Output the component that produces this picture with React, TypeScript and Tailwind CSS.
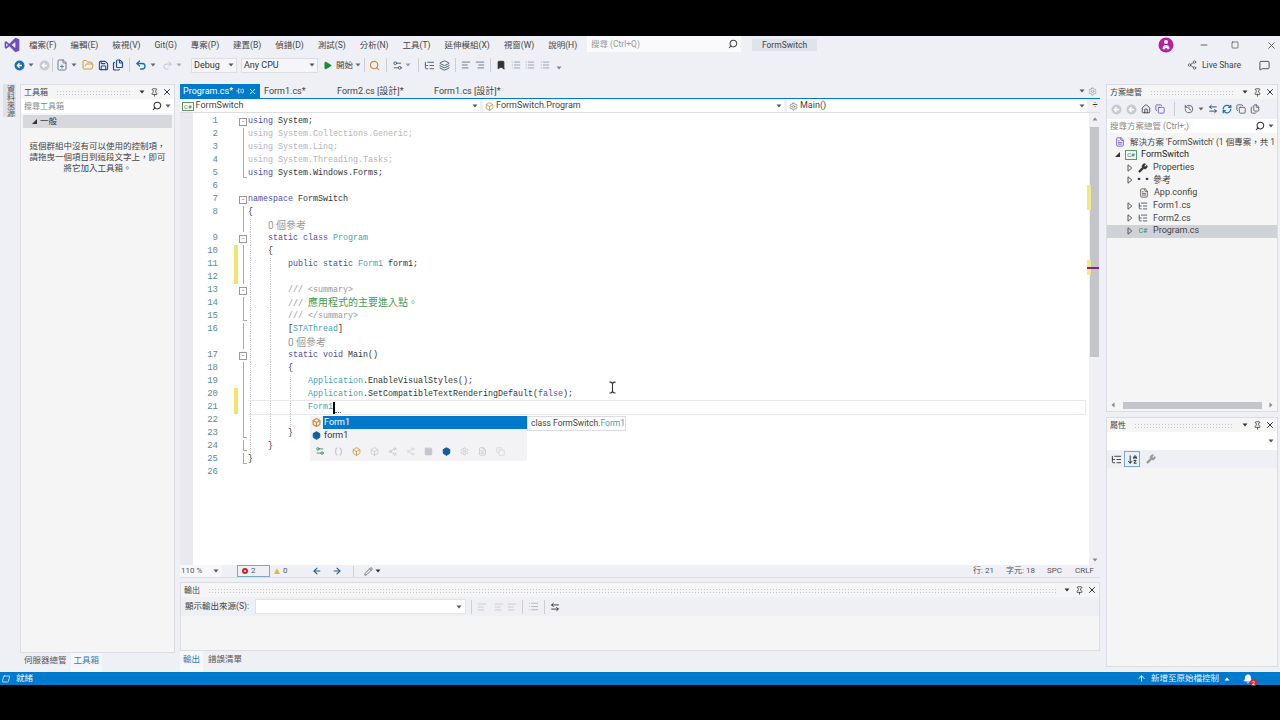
import React from 'react';
import {
  ArrowLeft, ArrowRight, ArrowUp, Bell, Bookmark, Braces, Box, Copy, Files, FileText, History, Layers, ListTree, MessageSquare,
  Minus, Pin, Play, RefreshCw, Home, Save, Search, Settings, Share2, Square, TextCursor, Undo2, Redo2, Wrench, X, ArrowLeftRight, Settings2,
  FolderOpen, FilePlus, AlignLeft, AlignRight, ArrowDownAZ, List, Pencil,
} from 'lucide-react';

const ui = "font-['Roboto','Noto_Sans_CJK_TC',sans-serif]";

const Caret = ({ className = 'text-[#555]' }: { className?: string }) => (
  <svg width="6" height="4" viewBox="0 0 6 4" className={`shrink-0 ${className}`}>
    <path d="M0.5 0.5h5L3 3.5z" fill="currentColor" />
  </svg>
);

const Tri = ({ filled }: { filled?: boolean }) => (
  <svg width="6" height="8" viewBox="0 0 6 8" className="shrink-0">
    {filled ? <path d="M5 1v5H0z" fill="#333" /> : <path d="M1 .8 4.8 4 1 7.2z" fill="none" stroke="#555" />}
  </svg>
);

const VsLogo = () => (
  <svg width="16" height="16" viewBox="0 0 24 24">
    <path
      fillRule="evenodd"
      fill="#6d4fbe"
      d="M17 1 8 10 3.4 6.4 1 7.6v8.8l2.4 1.2L8 14l9 9 6-2.5v-17zM3.4 9.4 6 12l-2.6 2.6zM17 7.5v9L11.5 12z"
    />
  </svg>
);

const Avatar = () => (
  <svg width="16" height="16" viewBox="0 0 16 16">
    <circle cx="8" cy="8" r="7.5" fill="#b81f9e" />
    <circle cx="8" cy="5" r="2" fill="#fff" />
    <path d="M4.5 12c0-3 1.5-4 3.5-4s3.5 1 3.5 4l-2 .5-1.5-2-1.500 2z" fill="#fff" />
  </svg>
);

const CircleNav = ({ color }: { color: string }) => (
  <svg width="11" height="11" viewBox="0 0 11 11" className="shrink-0">
    <circle cx="5.5" cy="5.500" r="5" fill={color} />
    <path d="M8 5.500H3.500M5.500 3.300 3.300 5.500l2.200 2.200" stroke="#fff" strokeWidth="1.300" fill="none" />
  </svg>
);

const Grip = () => (
  <div className="flex-1 mx-2 h-[5px] bg-[radial-gradient(#c4c6cc_0.7px,transparent_0.8px)] bg-[length:3px_3px]" />
);

const PanelTitle = ({ title }: { title: string }) => (
  <div className="h-[14px] flex items-center pl-[3px] pr-[2px] text-[8px] text-[#444] shrink-0">
    <span className="pt-[1px]">{title}</span>
    <Grip />
    <Caret className="text-[#333] mr-[5px]" />
    <Pin size={9} className="text-[#333] mr-[3px]" />
    <X size={10} className="text-[#333]" strokeWidth={2.400} />
  </div>
);

const menus = ['檔案(F)', '編輯(E)', '檢視(V)', 'Git(G)', '專案(P)', '建置(B)', '偵錯(D)', '測試(S)', '分析(N)', '工具(T)', '延伸模組(X)', '視窗(W)', '說明(H)'];

const Sep = () => <div className="w-px h-[14px] bg-[#ccced6] mx-[5px] shrink-0" />;

const TitleBar = () => (
  <div className="h-[18px] flex items-center text-[8.500px] text-[#444] shrink-0">
    <div className="w-[29px] pl-[4px] flex"><VsLogo /></div>
    <div className="flex gap-[14px] w-[558px]">
      {menus.map((m) => <span key={m} className="whitespace-nowrap">{m}</span>)}
    </div>
    <div className="w-[154px] h-[16px] bg-[#fafafc] flex items-center justify-between pl-[4px] pr-[3px] text-[#999] -mt-[2px]">
      <span>搜尋 (Ctrl+Q)</span>
      <Search size={10} className="text-[#444] scale-x-[-1]" strokeWidth={2.500} />
    </div>
    <div className="ml-[11px] w-[65px] h-[12px] bg-[#dfe3ea] flex items-center justify-center text-[#444]">FormSwitch</div>
    <div className="flex-1 flex justify-end pr-[25px]"><Avatar /></div>
    <Minus size={10} className="text-[#444] mr-[22px]" />
    <Square size={8} className="text-[#444] mr-[27px]" />
    <X size={11} className="text-[#555] mr-[3px]" />
  </div>
);

const Combo = ({ label, w, gap }: { label: string; w: string; gap: string }) => (
  <div className={`${w} ${gap} h-[15px] bg-[#f6f6f9] border border-[#dcdde3] flex items-center justify-between px-[2px] text-[9px] text-[#333] shrink-0`}>
    <span className="pt-[1px]">{label}</span>
    <Caret />
  </div>
);

const ToolBar = () => (
  <div className="h-[22px] flex items-center pl-[14px] shrink-0">
    <CircleNav color="#1f6fa8" />
    <Caret className="mx-[3px] text-[#666]" />
    <div className="ml-[2px] flex"><CircleNav color="#c7cad2" /></div>
    <div className="w-px h-[14px] bg-[#ccced6] mx-[2px] shrink-0" />
    <FilePlus size={12} className="text-[#6a7a8c] ml-[1px]" />
    <Caret className="mx-[3px] text-[#666]" />
    <FolderOpen size={12} className="text-[#c99a3e] ml-[2px]" />
    <Save size={11} className="text-[#1f4f96] ml-[4px]" strokeWidth={2.400} />
    <Files size={12} className="text-[#1f4f96] ml-[3px]" strokeWidth={2.400} />
    <Sep />
    <Undo2 size={12} className="text-[#1f6fa8]" strokeWidth={2.600} />
    <Caret className="mx-[3px] text-[#666]" />
    <Redo2 size={11} className="text-[#c0c3cb] ml-[3px]" />
    <Caret className="mx-[3px] text-[#aaa]" />
    <div className="w-[6px]" />
    <Combo label="Debug" w="w-[46px]" gap="mr-[4px]" />
    <Combo label="Any CPU" w="w-[77px]" gap="mr-[4px]" />
    <div className="w-px" />
    <Play size={9} className="text-[#1a8a3a] fill-[#1a8a3a] mr-[4px]" />
    <span className="text-[8.500px] text-[#444] mr-[2px]">開始</span>
    <Caret className="text-[#666]" />
    <div className="w-px h-[14px] bg-[#ccced6] mx-[3px] shrink-0" />
    <Search size={11} className="text-[#c98a2e] ml-[1px] mr-[1px]" strokeWidth={2.500} />
    <Sep />
    <Settings2 size={11} className="text-[#4a5a6a]" />
    <Caret className="mx-[2px] text-[#999]" />
    <Sep />
    <ListTree size={11} className="text-[#4a5a6a]" />
    <Layers size={11} className="text-[#4a5a6a] ml-[4px]" />
    <Sep />
    <AlignLeft size={10} className="text-[#5a6a7a]" />
    <AlignRight size={10} className="text-[#5a6a7a] ml-[4px]" />
    <Sep />
    <Bookmark size={10} className="text-[#333] fill-[#333]" />
    <List size={10} className="text-[#8b97a5] ml-[5px]" />
    <List size={10} className="text-[#8b97a5] ml-[4px]" />
    <List size={10} className="text-[#8b97a5] ml-[5px]" />
    <Caret className="ml-[6px] text-[#888] mt-[6px]" />
    <div className="flex-1" />
    <Share2 size={10} className="text-[#555] mr-[5px]" />
    <span className="text-[8.500px] text-[#444] mr-[18px]">Live Share</span>
    <MessageSquare size={11} className="text-[#444] mr-[10px]" />
  </div>
);

const LeftDock = () => (
  <div className="flex w-[175px] shrink-0 h-full">
    <div className="w-[20px] shrink-0 pl-[3px]">
      <div className="w-[13px] h-[33px] bg-[#dfe1e7] text-[8px] text-[#555] leading-[8px] text-center [writing-mode:vertical-rl] flex items-center justify-center">資料來源</div>
    </div>
    <div className="w-[155px] flex flex-col">
      <div className="flex-1 flex flex-col bg-[#f5f5f5] border border-[#dcdde2] min-h-0">
        <PanelTitle title="工具箱" />
        <div className="h-[14px] bg-white flex items-center justify-between px-[3px] text-[8px] text-[#888]">
          <span className="pt-[1px]">搜尋工具箱</span>
          <div className="flex items-center gap-[3px]">
            <Search size={10} className="text-[#333] scale-x-[-1]" strokeWidth={2.500} />
            <Caret />
          </div>
        </div>
        <div className="mx-[2px] mt-[2px] h-[13px] bg-[#d6d8de] flex items-center pl-[9px] gap-[2px] text-[8.500px] text-[#333]">
          <Tri filled />
          <span>一般</span>
        </div>
        <p className="mt-[13px] px-[6px] text-[8.500px] leading-[11px] text-center text-[#444]">這個群組中沒有可以使用的控制項，請拖曳一個項目到這段文字上，即可將它加入工具箱。</p>
      </div>
      <div className="h-[19px] shrink-0 flex text-[8.500px] pl-[3px]">
        <span className="px-[1px] pt-[1px] text-[#555]">伺服器總管</span>
        <span className="ml-[3px] px-[3px] pt-[1px] text-[#2f7ab0] bg-[#f6f7fa]">工具箱</span>
      </div>
    </div>
  </div>
);

type Tok = [string, string];
type CodeRow = { n?: number; indent: number; toks?: Tok[]; fold?: 'box' | 'mid' | 'end'; changed?: boolean; lens?: boolean; current?: boolean };

const kw = 'text-[#4e4eae]';
const tx = 'text-[#333]';
const ty = 'text-[#46a2b6]';
const dim = 'text-[#b4b4bc]';
const doc = 'text-[#9a9a9a]';
const cm = 'text-[#3f9a58] text-[10px]';

const rows: CodeRow[] = [
  { n: 1, indent: 0, fold: 'box', toks: [['using', kw], [' System;', tx]] },
  { n: 2, indent: 0, fold: 'mid', toks: [['using System.Collections.Generic;', dim]] },
  { n: 3, indent: 0, fold: 'mid', toks: [['using System.Linq;', dim]] },
  { n: 4, indent: 0, fold: 'mid', toks: [['using System.Threading.Tasks;', dim]] },
  { n: 5, indent: 0, fold: 'end', toks: [['using', kw], [' System.Windows.Forms;', tx]] },
  { n: 6, indent: 0 },
  { n: 7, indent: 0, fold: 'box', toks: [['namespace', kw], [' FormSwitch', tx]] },
  { n: 8, indent: 0, fold: 'mid', toks: [['{', tx]] },
  { indent: 1, fold: 'mid', lens: true, toks: [['0 個參考', 'text-[#999]']] },
  { n: 9, indent: 1, fold: 'box', toks: [['static class', kw], [' ', tx], ['Program', ty]] },
  { n: 10, indent: 1, fold: 'mid', changed: true, toks: [['{', tx]] },
  { n: 11, indent: 2, fold: 'mid', changed: true, toks: [['public static', kw], [' ', tx], ['Form1', ty], [' form1;', tx]] },
  { n: 12, indent: 2, fold: 'mid', changed: true },
  { n: 13, indent: 2, fold: 'box', toks: [['/// <summary>', doc]] },
  { n: 14, indent: 2, fold: 'mid', toks: [['/// ', doc], ['應用程式的主要進入點。', cm]] },
  { n: 15, indent: 2, fold: 'end', toks: [['/// </summary>', doc]] },
  { n: 16, indent: 2, fold: 'mid', toks: [['[', tx], ['STAThread', ty], [']', tx]] },
  { indent: 2, fold: 'mid', lens: true, toks: [['0 個參考', 'text-[#999]']] },
  { n: 17, indent: 2, fold: 'box', toks: [['static void', kw], [' Main()', tx]] },
  { n: 18, indent: 2, fold: 'mid', toks: [['{', tx]] },
  { n: 19, indent: 3, fold: 'mid', toks: [['Application', ty], ['.EnableVisualStyles();', tx]] },
  { n: 20, indent: 3, fold: 'mid', changed: true, toks: [['Application', ty], ['.SetCompatibleTextRenderingDefault(', tx], ['false', kw], [');', tx]] },
  { n: 21, indent: 3, fold: 'mid', changed: true, current: true, toks: [['Form1', ty]] },
  { n: 22, indent: 3, fold: 'mid' },
  { n: 23, indent: 2, fold: 'end', toks: [['}', tx]] },
  { n: 24, indent: 1, fold: 'end', toks: [['}', tx]] },
  { n: 25, indent: 0, fold: 'end', toks: [['}', tx]] },
  { n: 26, indent: 0 },
];

const Fold = ({ kind }: { kind?: CodeRow['fold'] }) => (
  <div className="w-[9px] h-full shrink-0 relative">
    {kind === 'box' && <div className="absolute left-0 top-[3px] w-[8px] h-[8px] border border-[#999] bg-white text-[8px] leading-[5px] text-center text-[#666]">-</div>}
    {kind === 'mid' && <div className="absolute left-[4px] top-0 bottom-0 border-l border-[#a9a9a9]" />}
    {kind === 'end' && <div className="absolute left-[4px] top-0 h-[11px] w-[4px] border-l border-b border-[#a9a9a9]" />}
  </div>
);

const Row = ({ r }: { r: CodeRow }) => (
  <div className="h-[13px] flex">
    <div className="w-[25px] shrink-0 text-right text-[9px] leading-[13px] text-[#5a8a9a] font-['Liberation_Mono',monospace]">{r.n}</div>
    <div className="w-[16px] shrink-0" />
    <div className={`w-1 shrink-0 ${r.changed ? 'bg-[#eee56e]' : ''}`} />
    <div className="w-px shrink-0" />
    <Fold kind={r.fold} />
    <div className={`flex-1 flex ${r.current ? 'border-y border-r border-[#e8e8ec] -my-px h-[15px] items-center' : ''}`}>
      {Array.from({ length: r.indent }).map((_, i) => (
        <div key={i} className="w-5 h-full pl-[2px] shrink-0">
          <div className="h-full border-l border-dotted border-[#c8c8c8]" />
        </div>
      ))}
      {r.toks && (
        <div className={`whitespace-pre leading-[13px] ${r.lens ? 'text-[10px]' : "text-[8.340px] font-['Liberation_Mono','Noto_Sans_CJK_TC',monospace]"}`}>
          {r.toks.map(([t, c], i) => <span key={i} className={c}>{t}</span>)}
        </div>
      )}
      {r.current && <div className="w-[1.500px] h-[12px] bg-black" />}
      {r.current && <div className="w-[6px] h-[2px] border-b border-dotted border-[#667] self-end mb-[1px]" />}
    </div>
  </div>
);

const Completion = () => (
  <div className="absolute left-[130px] top-[303px] flex items-start">
    <div className="w-[217px] bg-[#f3f3f5] pb-[1px]">
      <div className="h-[13px] flex items-center">
        <div className="w-[13px] flex justify-center"><Box size={9} className="text-[#c98a2e]" strokeWidth={3} /></div>
        <div className="flex-1 h-full bg-[#0079cb] text-white text-[9px] leading-[13px] pl-[1px]">Form1</div>
      </div>
      <div className="h-[13px] flex items-center">
        <div className="w-[13px] flex justify-center"><Box size={9} className="text-[#0f5f9a] fill-[#0f5f9a]" /></div>
        <div className="flex-1 text-[#333] text-[9px] leading-[13px] pl-[1px]">form1</div>
      </div>
      <div className="h-[18px] flex items-center pl-[5px] gap-[9px]">
        <Settings2 size={10} className="text-[#2a8a5a]" />
        <Braces size={9} className="text-[#aab]" />
        <Box size={9} className="text-[#c98a2e]" />
        <Box size={9} className="text-[#c4c6cc]" />
        <Share2 size={9} className="text-[#c4c6cc]" />
        <Share2 size={9} className="text-[#d0d2d8]" />
        <Square size={9} className="text-[#c4c6cc] fill-[#c4c6cc]" />
        <Box size={9} className="text-[#0f5f9a] fill-[#0f5f9a]" />
        <Settings size={9} className="text-[#c4c6cc]" />
        <FileText size={9} className="text-[#c4c6cc]" />
        <Copy size={9} className="text-[#d0d2d8]" />
      </div>
    </div>
    <div className="h-[15px] w-[99px] bg-white border border-[#dcdde2] text-[8.500px] leading-[13px] pl-[3px] text-[#444] whitespace-nowrap">
      class FormSwitch.<span className={ty}>Form1</span>
    </div>
  </div>
);

const EditorArea = () => (
  <div className="flex-1 min-h-0 flex bg-white relative overflow-hidden">
    <div className="w-[13px] shrink-0 bg-[#eaeaee]" />
    <div className="flex-1 pt-[2px] pr-[3px]">
      {rows.map((r, i) => <Row key={i} r={r} />)}
    </div>
    <div className="w-[11px] shrink-0 bg-[#f0f0f4] flex flex-col items-center relative">
      <Caret className="text-[#888] rotate-180 mt-[4px]" />
      <div className="mt-[6px] w-[9px] h-[230px] bg-[#c4c5cb]" />
      <div className="flex-1" />
      <Caret className="text-[#888] mb-[3px]" />
      <div className="absolute left-[-2px] top-[72px] w-[4px] h-[25px] bg-[#efe98a]" />
      <div className="absolute left-[-2px] top-[147px] w-[4px] h-[15px] bg-[#efe98a]" />
      <div className="absolute left-[-2px] top-[154px] w-[12px] h-[2px] bg-[#8a1f8a]" />
    </div>
    <Completion />
    <TextCursor size={13} className="absolute left-[426px] top-[268px] text-[#333]" />
  </div>
);

const EditorFooter = () => (
  <div className="h-[13px] shrink-0 flex items-center text-[8px] text-[#555] bg-[#eef0f5] border-b border-[#dcdde2]">
    <div className="w-[42px] h-full bg-[#f7f7f9] flex items-center justify-between px-[1px] pr-[3px]"><span>110 %</span><Caret /></div>
    <div className="ml-[15px] w-[33px] h-[12px] border border-[#7fa9bb] flex items-center gap-[3px] pl-[4px]">
      <div className="w-[6px] h-[6px] rounded-full border-2 border-[#c8242c]" />
      <span>2</span>
    </div>
    <div className="ml-[4px] w-0 h-0 border-x-[3.500px] border-x-transparent border-b-[6px] border-b-[#e5b83a]" />
    <span className="ml-[3px]">0</span>
    <ArrowLeft size={10} className="ml-[24px] text-[#1f5f88]" strokeWidth={2.600} />
    <ArrowRight size={10} className="ml-[10px] text-[#1f5f88]" strokeWidth={2.600} />
    <div className="ml-[11px] w-px h-[11px] bg-[#cfd1d8]" />
    <Pencil size={9} className="ml-[10px] text-[#555]" />
    <Caret className="ml-[2px] text-[#333]" />
    <div className="flex-1" />
    <span className="w-[33px]">行: 21</span>
    <span className="w-[41px]">字元: 18</span>
    <span className="w-[28px]">SPC</span>
    <span className="w-[24px]">CRLF</span>
    <div className="w-px" />
  </div>
);

const OutputPanel = () => (
  <div className="h-[69px] shrink-0 mt-[4px] flex flex-col bg-[#f5f5f5] border border-[#dcdde2]">
    <PanelTitle title="輸出" />
    <div className="h-[19px] bg-[#eef0f5] flex items-center pl-[4px] text-[8.500px] text-[#444]">
      <span className="w-[70px] whitespace-nowrap">顯示輸出來源(S):</span>
      <div className="w-[211px] h-[15px] bg-white border border-[#e2e3e8] flex items-center justify-end pr-[3px]"><Caret /></div>
      <Sep />
      <AlignLeft size={10} className="text-[#c4c6cc]" />
      <AlignLeft size={10} className="text-[#c4c6cc] ml-[7px]" />
      <AlignLeft size={10} className="text-[#c4c6cc] ml-[3px]" />
      <Sep />
      <List size={11} className="text-[#b0b3bb]" />
      <Sep />
      <ArrowLeftRight size={10} className="text-[#222]" />
    </div>
  </div>
);

const treeRows: { indent: string; tri?: 'open' | 'closed'; icon: React.ReactNode; label: string; sel?: boolean; bold?: boolean; size?: string }[] = [
  { indent: 'pl-[7px]', icon: <FileText size={10} className="text-[#6d4fbe]" />, label: "解決方案 'FormSwitch' (1 個專案，共 1", size: 'text-[8.500px]' },
  { indent: 'pl-[8px]', tri: 'open', icon: <span className="border border-[#5a9a6a] text-[#3a7a4a] text-[6px] leading-[8px] px-[1px]">C#</span>, label: 'FormSwitch', bold: true },
  { indent: 'pl-[20px]', tri: 'closed', icon: <Wrench size={10} className="text-[#333] fill-[#333]" />, label: 'Properties' },
  { indent: 'pl-[20px]', tri: 'closed', icon: <span className="text-[#333] text-[8px] leading-[8px]">▪▪</span>, label: '參考' },
  { indent: 'pl-[31px]', icon: <FileText size={10} className="text-[#555]" />, label: 'App.config' },
  { indent: 'pl-[20px]', tri: 'closed', icon: <ListTree size={10} className="text-[#3a4a5a]" />, label: 'Form1.cs' },
  { indent: 'pl-[20px]', tri: 'closed', icon: <ListTree size={10} className="text-[#3a4a5a]" />, label: 'Form2.cs' },
  { indent: 'pl-[20px]', tri: 'closed', icon: <span className="text-[#3a8a5a] text-[7px] leading-[8px]">C#</span>, label: 'Program.cs', sel: true },
];

const RightDock = () => (
  <div className="w-[172px] shrink-0 flex flex-col pb-[5px]">
    <div className="h-[328px] shrink-0 flex flex-col bg-[#f5f5f5] border border-[#dcdde2]">
      <PanelTitle title="方案總管" />
      <div className="h-[20px] bg-[#eef0f5] flex items-center pl-[4px] gap-[4px]">
        <CircleNav color="#c7cad2" />
        <CircleNav color="#c7cad2" />
        <Home size={10} className="text-[#333]" />
        <Copy size={10} className="text-[#6d4fbe]" />
        <Sep />
        <History size={10} className="text-[#555]" />
        <Caret className="text-[#666]" />
        <ArrowLeftRight size={10} className="text-[#1f2f4f]" />
        <RefreshCw size={10} className="text-[#1f6fb8]" strokeWidth={3} />
        <Copy size={10} className="text-[#555]" />
        <Files size={10} className="text-[#555]" />
      </div>
      <div className="h-[14px] bg-white flex items-center justify-between px-[3px] text-[8.500px] text-[#888]">
        <span>搜尋方案總管 (Ctrl+;)</span>
        <div className="flex items-center gap-[3px]">
          <Search size={10} className="text-[#333] scale-x-[-1]" strokeWidth={2.500} />
          <Caret />
        </div>
      </div>
      <div className="pt-[3px] flex-1 overflow-hidden">
        {treeRows.map((t) => (
          <div key={t.label} className={`h-[12.700px] flex items-center gap-[4px] ${t.size ?? 'text-[9px]'} text-[#444] whitespace-nowrap ${t.indent} ${t.sel ? 'bg-[#d0d2da]' : ''}`}>
            {t.tri && <Tri filled={t.tri === 'open'} />}
            <div className="w-[12px] flex justify-center shrink-0">{t.icon}</div>
            <span className={t.bold ? 'text-[#222]' : ''}>{t.label}</span>
          </div>
        ))}
      </div>
      <div className="h-[10px] flex items-center justify-between px-[3px] mb-[1px]">
        <Caret className="text-[#888] rotate-90" />
        <div className="w-[139px] h-[7px] bg-[#c4c5cb]" />
        <Caret className="text-[#888] -rotate-90" />
      </div>
    </div>
    <div className="flex-1 mt-[5px] flex flex-col bg-[#f5f5f5] border border-[#dcdde2] min-h-0">
      <PanelTitle title="屬性" />
      <div className="h-[18px] bg-white flex items-center justify-end pr-[3px]"><Caret /></div>
      <div className="h-[18px] bg-[#eef0f5] flex items-center pl-[4px] gap-[2px]">
        <ListTree size={11} className="text-[#333]" />
        <div className="w-[16px] h-[16px] border border-[#7fa9bb] bg-[#e6f0f6] flex items-center justify-center">
          <ArrowDownAZ size={11} className="text-[#222]" />
        </div>
        <Wrench size={10} className="text-[#999] fill-[#999] ml-[4px]" />
      </div>
    </div>
  </div>
);

const StatusBar = () => (
  <div className="h-[13px] shrink-0 bg-[#007acc] flex items-center text-[8.500px] text-[#e8f2fa] pl-[2px]">
    <Square size={8} className="text-white -skew-x-12" />
    <span className="ml-[6px]">就緒</span>
    <div className="flex-1" />
    <ArrowUp size={9} className="text-white mr-[5px]" strokeWidth={2.600} />
    <span>新增至原始檔控制</span>
    <Caret className="ml-[5px] text-white rotate-180" />
    <div className="relative ml-[13px] mr-[27px]">
      <Bell size={10} className="text-white fill-white" />
      <span className="absolute -right-[4px] -bottom-[2px] w-[7px] h-[7px] rounded-full bg-[#d12a2a] text-white text-[6px] leading-[7px] text-center">2</span>
    </div>
  </div>
);

export default function App() {
  return (
    <div className={`w-[1280px] h-[720px] bg-black flex flex-col overflow-hidden ${ui}`}>
      <div className="h-9 shrink-0" />
      <div className="h-[649px] shrink-0 flex flex-col bg-[#eef0f5]">
        <TitleBar />
        <ToolBar />
        <div className="h-[8px] shrink-0" />
        <div className="flex-1 min-h-0 flex">
          <LeftDock />
          <div className="w-[5px] shrink-0" />
          <div className="w-[920px] shrink-0 flex flex-col">
            <div className="h-[14px] shrink-0 flex items-end text-[9px] text-[#444]">
              <div className="w-[80px] h-full bg-[#007acc] text-white flex items-center justify-between pl-[3px] pr-[3px]">
                <span className="pt-[1px]">Program.cs*</span>
                <span className="flex items-center gap-[4px]"><Pin size={8} className="rotate-90" /><X size={9} strokeWidth={2.500} /></span>
              </div>
              <span className="h-full flex items-center pt-[1px] ml-[4px] w-[73px]">Form1.cs*</span>
              <span className="h-full flex items-center pt-[1px] w-[97px]">Form2.cs [設計]*</span>
              <span className="h-full flex items-center pt-[1px]">Form1.cs [設計]*</span>
              <div className="flex-1 h-full flex items-center justify-end gap-[3px] pr-[3px]">
                <Caret />
                <Settings size={9} className="text-[#999]" />
              </div>
            </div>
            <div className="h-px bg-[#007acc] shrink-0" />
            <div className="h-[14px] shrink-0 flex gap-[3px] bg-[#eef0f5] border-b border-[#dcdde2] text-[9px] text-[#444]">
              <div className="w-[300px] bg-white flex items-center justify-between px-[2px]">
                <span className="flex items-center gap-[2px] pt-[1px]"><span className="border border-[#5a9a6a] text-[#3a7a4a] text-[6px] leading-[7px] px-[1px]">C#</span>FormSwitch</span>
                <Caret />
              </div>
              <div className="w-[301px] bg-white flex items-center justify-between px-[2px]">
                <span className="flex items-center gap-[2px] pt-[1px]"><Box size={9} className="text-[#c98a2e]" />FormSwitch.Program</span>
                <Caret />
              </div>
              <div className="flex-1 bg-white flex items-center justify-between px-[2px]">
                <span className="flex items-center gap-[2px] pt-[1px]"><Settings size={9} className="text-[#777]" />Main()</span>
                <Caret />
              </div>
              <div className="w-[10px] shrink-0 flex items-center justify-center text-[#333]">÷</div>
            </div>
            <EditorArea />
            <EditorFooter />
            <OutputPanel />
            <div className="h-[21px] shrink-0 flex text-[8.500px]">
              <span className="w-[23px] text-center pt-[2px] text-[#2f7ab0] bg-[#f6f7fa]">輸出</span>
              <span className="ml-[5px] pt-[2px] text-[#555]">錯誤清單</span>
            </div>
          </div>
          <div className="w-[6px] shrink-0" />
          <RightDock />
          <div className="flex-1" />
        </div>
        <StatusBar />
      </div>
      <div className="flex-1" />
    </div>
  );
}
